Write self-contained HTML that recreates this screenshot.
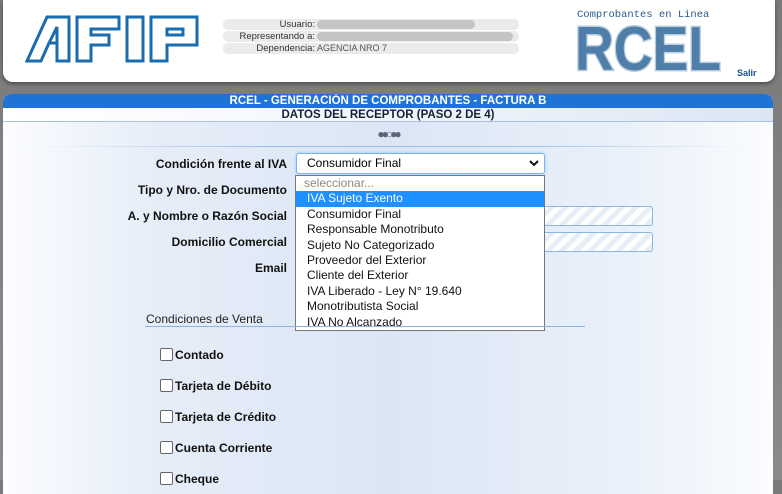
<!DOCTYPE html>
<html><head><meta charset="utf-8"><style>
*{box-sizing:border-box;margin:0;padding:0}
body{width:782px;height:480px;overflow:hidden;background:linear-gradient(#7a7a7a,#8a8a8a);font-family:"Liberation Sans",Arial,sans-serif;position:relative}
.hdr{position:absolute;left:3px;top:0;width:772px;height:82px;background:#fff;border-radius:0 0 10px 10px;box-shadow:0 2px 4px rgba(0,0,0,.4)}
.info{position:absolute;left:220px;width:296px;height:11px;background:#ebebeb;border-radius:5px;font-size:9.5px;color:#333;line-height:11px}
.info b{font-weight:normal;position:absolute;right:204px;width:110px;text-align:right}
.info i{position:absolute;left:94px;font-style:normal;color:#555;font-size:9px}
.blur{position:absolute;left:94px;top:1px;height:9px;background:#c4c4c4;border-radius:5px}
.main{position:absolute;left:3px;top:94px;width:770px;height:400px;background:linear-gradient(90deg,#fbfcfe 0%,#e6edf8 20%,#dbe6f5 50%,#e9f0f9 80%,#fbfcfe 100%);border-radius:8px 8px 0 0;overflow:hidden}
.bar{height:14px;background:#1f73d6;color:#fff;font-weight:bold;font-size:11.5px;text-align:center;line-height:15px}
.sub{height:14px;background:linear-gradient(90deg,#fff,#f5f8fc 40%,#dbe6f4);color:#123;font-weight:bold;font-size:11.5px;text-align:center;line-height:14px;border-bottom:1px solid #aac2e0}
.lbl{position:absolute;right:495px;font-size:12px;font-weight:bold;color:#111;white-space:nowrap}
.sel{position:absolute;left:296px;top:153px;width:249px;height:21px;border:1px solid #7db3f0;border-radius:3px;background:#fff;font-size:12px;line-height:19px;padding-left:10px;box-shadow:0 0 3px #8cf}
.dd{position:absolute;left:295px;top:175px;width:250px;height:156px;background:#fff;border:1px solid #777;font-size:12px;line-height:15.4px}
.dd div{padding-left:11px;color:#111}
.inp{position:absolute;left:540px;width:113px;height:20px;border:1px solid #8ab6e0;border-radius:3px;background:repeating-linear-gradient(135deg,#fff 0 5px,#e6eef8 5px 10px)}
.cb{position:absolute;left:160px;font-size:12px;font-weight:bold;color:#111}
.cb span{display:inline-block;width:13px;height:13px;border:1px solid #666;border-radius:2px;background:#fff;vertical-align:-2px;margin-right:2px}
</style></head><body>
<div class="hdr">
<svg style="position:absolute;left:22px;top:13px" width="176" height="52" viewBox="0 0 176 52" fill="none" stroke="#1a6cae" stroke-width="3">
<path d="M2 48 L22 4 L44 4 L44 48 L32 48 L32 30 L24 30 L16 48 Z"/><path d="M24 30 L32 14 L32 30"/>
<path d="M52 48 L52 4 L94 4 L94 16 L66 16 L66 22 L84 22 L84 32 L66 32 L66 48 Z"/>
<path d="M102 48 L102 4 L118 4 L118 48 Z"/>
<path d="M126 48 L126 4 L172 4 L172 32 L142 32 L142 48 Z M142 16 L158 16 L158 22 L142 22 Z"/>
</svg>
<div class="info" style="top:19px"><b>Usuario:</b><div class="blur" style="width:158px"></div></div>
<div class="info" style="top:31px"><b>Representando a:</b><div class="blur" style="width:196px"></div></div>
<div class="info" style="top:43px"><b>Dependencia:</b><i>AGENCIA NRO 7</i></div>
<div style="position:absolute;left:574px;top:9px;font-family:'Liberation Mono',monospace;font-size:10.5px;color:#2a5a8a">Comprobantes en Linea</div>
<svg style="position:absolute;left:568px;top:20px" width="156" height="56" viewBox="0 0 156 56">
<text x="4" y="50" font-family="Liberation Sans" font-weight="bold" font-size="62" textLength="146" lengthAdjust="spacingAndGlyphs" fill="#4f7ea8" stroke="#b8cde0" stroke-width="3" paint-order="stroke">RCEL</text></svg>
<div style="position:absolute;left:734px;top:68px;font-size:9px;color:#1a4f8a;font-weight:bold">Salir</div>
</div>
<div class="main">
<div class="bar">RCEL - GENERACIÓN DE COMPROBANTES - FACTURA B</div>
<div class="sub">DATOS DEL RECEPTOR (PASO 2 DE 4)</div>
<div style="text-align:center;font-size:12px;color:#5a6478;margin-top:5px;letter-spacing:-3px">●●○●●</div>
<div style="position:absolute;top:52px;left:0;right:0;height:1px;background:linear-gradient(90deg,#fff,#9cc0ea,#9cc0ea,#fff)"></div>
</div>
<div class="lbl" style="top:157px">Condición frente al IVA</div>
<div class="lbl" style="top:183px">Tipo y Nro. de Documento</div>
<div class="lbl" style="top:209px">A. y Nombre o Razón Social</div>
<div class="lbl" style="top:235px">Domicilio Comercial</div>
<div class="lbl" style="top:261px">Email</div>
<div class="inp" style="top:206px"></div>
<div class="inp" style="top:232px"></div>
<div class="sel">Consumidor Final<svg style="position:absolute;right:5px;top:6px" width="10" height="7" viewBox="0 0 10 7"><path d="M1 1 L5 5 L9 1" stroke="#111" stroke-width="2" fill="none"/></svg></div>
<div class="dd">
<div style="color:#888;padding-left:8px">seleccionar...</div>
<div style="background:#1e90ff;color:#fff">IVA Sujeto Exento</div>
<div>Consumidor Final</div><div>Responsable Monotributo</div><div>Sujeto No Categorizado</div><div>Proveedor del Exterior</div><div>Cliente del Exterior</div><div>IVA Liberado - Ley N° 19.640</div><div>Monotributista Social</div><div>IVA No Alcanzado</div>
</div>
<div style="position:absolute;left:146px;top:312px;font-size:12px;color:#222">Condiciones de Venta</div>
<div style="position:absolute;left:145px;top:326px;width:440px;height:1px;background:#8ab6e0"></div>
<div class="cb" style="top:348px"><span></span>Contado</div>
<div class="cb" style="top:379px"><span></span>Tarjeta de Débito</div>
<div class="cb" style="top:410px"><span></span>Tarjeta de Crédito</div>
<div class="cb" style="top:441px"><span></span>Cuenta Corriente</div>
<div class="cb" style="top:472px"><span></span>Cheque</div>
</body></html>
